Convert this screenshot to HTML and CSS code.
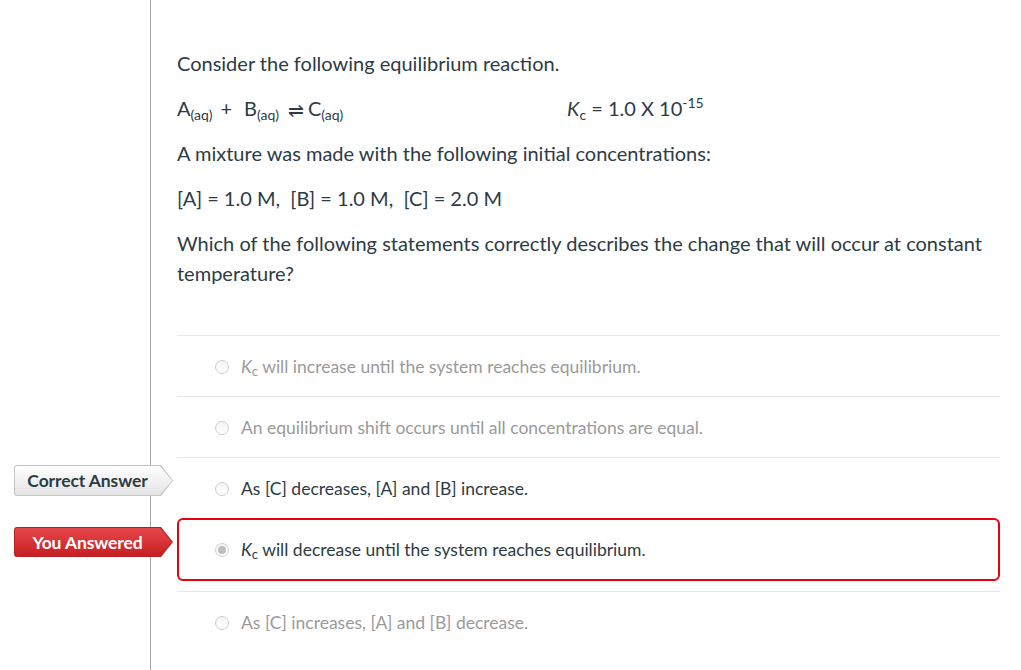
FILE: index.html
```html
<!DOCTYPE html>
<html lang="en">
<head>
<meta charset="utf-8">
<title>Equilibrium question</title>
<link rel="stylesheet" href="styles.css">
</head>
<body>
<div class="page">
  <div class="row">
    <div class="row-side"></div>
    <div class="row-main question">
      <p>Consider the following equilibrium reaction.</p>
      <p class="eq"><span class="eq-left">A<sub>(aq)</sub><span class="plus">+</span>B<sub>(aq)</sub><span class="arrow">&#8652;</span>C<sub>(aq)</sub></span><span class="kc"><i>K</i><sub>c</sub> = 1.0 X 10<sup>-15</sup></span></p>
      <p>A mixture was made with the following initial concentrations:</p>
      <p>[A] = 1.0 M,&nbsp; [B] = 1.0 M,&nbsp; [C] = 2.0 M</p>
      <p>Which of the following statements correctly describes the change that will occur at constant temperature?</p>
    </div>
  </div>

  <div class="row">
    <div class="row-side"></div>
    <div class="row-main">
      <div class="answer muted"><span class="radio"></span><span><i>K</i><sub>c</sub> will increase until the system reaches equilibrium.</span></div>
    </div>
  </div>

  <div class="row">
    <div class="row-side"></div>
    <div class="row-main">
      <div class="answer muted"><span class="radio"></span><span>An equilibrium shift occurs until all concentrations are equal.</span></div>
    </div>
  </div>

  <div class="row">
    <div class="row-side"><div class="label label-correct"><div class="label-inner">Correct Answer</div></div></div>
    <div class="row-main">
      <div class="answer"><span class="radio"></span><span>As [C] decreases, [A] and [B] increase.</span></div>
    </div>
  </div>

  <div class="row">
    <div class="row-side side-selected"><div class="label label-wrong"><div class="label-inner">You Answered</div></div></div>
    <div class="row-main main-selected">
      <div class="answer selected"><span class="radio checked"></span><span><i>K</i><sub>c</sub> will decrease until the system reaches equilibrium.</span></div>
    </div>
  </div>

  <div class="row row-last">
    <div class="row-side"></div>
    <div class="row-main">
      <div class="answer muted"><span class="radio"></span><span>As [C] increases, [A] and [B] decrease.</span></div>
    </div>
  </div>
</div>
</body>
</html>
```

FILE: styles.css
```css
html, body {
  margin: 0;
  padding: 0;
  background: #fff;
}
body {
  font-family: Lato, "Open Sans", "Liberation Sans", sans-serif;
  color: #2d3b45;
}
.page {
  display: flex;
  flex-direction: column;
  min-height: 670px;
}
.row {
  display: grid;
  grid-template-columns: 151px 1fr;
}
.row-last {
  flex: 1;
}
.row-side {
  box-sizing: border-box;
  border-right: 1px solid #a9a9a9;
  padding-top: 8px;
  position: relative;
  z-index: 1;
}
.row-main {
  padding: 0 21px 0 26px;
}
.question {
  padding-top: 48px;
  padding-bottom: 32px;
}
.question p {
  margin: 0 0 15px;
  font-size: 20px;
  line-height: 30px;
}
sub, sup {
  font-size: 14px;
  line-height: 0;
}
sub {
  vertical-align: -4px;
}
sup {
  vertical-align: 8px;
}
.eq-left {
  display: inline-block;
  width: 390px;
}
.plus {
  margin: 0 12px 0 8px;
}
.arrow {
  display: inline-block;
  font-size: 19px;
  line-height: 0;
  margin: 0 4px 0 9px;
  vertical-align: -1px;
  font-weight: 300;
}
.answer {
  box-sizing: border-box;
  height: 61px;
  border-top: 1px solid #e8e8e8;
  padding: 1px 0 0 38px;
  display: flex;
  align-items: center;
  font-size: 17.5px;
  color: #2d3b45;
}
.answer.muted {
  color: #9a9a9a;
}
.answer sub {
  font-size: 13px;
  vertical-align: -3px;
}
.radio {
  box-sizing: border-box;
  width: 14px;
  height: 14px;
  border: 1px solid #cfcfcf;
  border-radius: 50%;
  background: linear-gradient(#f4f4f4, #ffffff);
  margin-right: 12px;
  flex: none;
  display: flex;
  align-items: center;
  justify-content: center;
}
.radio.checked::after {
  content: "";
  width: 8px;
  height: 8px;
  border-radius: 50%;
  background: #bdbdbd;
}
.main-selected {
  padding-bottom: 10px;
}
.answer.selected {
  height: 63px;
  border: 2px solid #e8000b;
  border-radius: 6px;
  padding: 0 0 0 36px;
}
.side-selected {
  padding-top: 9px;
}
.label {
  margin-left: 14px;
  width: 159px;
  height: 31px;
  box-sizing: border-box;
  padding: 1px;
  border-radius: 3px;
  clip-path: polygon(0 0, calc(100% - 12px) 0, 100% 50%, calc(100% - 12px) 100%, 0 100%);
}
.label-inner {
  height: 100%;
  border-radius: 2px;
  clip-path: polygon(0 0, calc(100% - 12px) 0, 100% 50%, calc(100% - 12px) 100%, 0 100%);
  display: flex;
  align-items: center;
  justify-content: center;
  padding-right: 12px;
  box-sizing: border-box;
  font-size: 17.5px;
  font-weight: 700;
  letter-spacing: -0.1px;
}
.label-correct {
  background: #c4c4c4;
}
.label-correct .label-inner {
  background: linear-gradient(#ffffff, #e4e4e4);
  color: #2d3b45;
}
.label-wrong {
  background: #b82024;
  height: 30px;
}
.label-wrong .label-inner {
  background: linear-gradient(#e6474a, #c71f23);
  color: #ffffff;
}
```
